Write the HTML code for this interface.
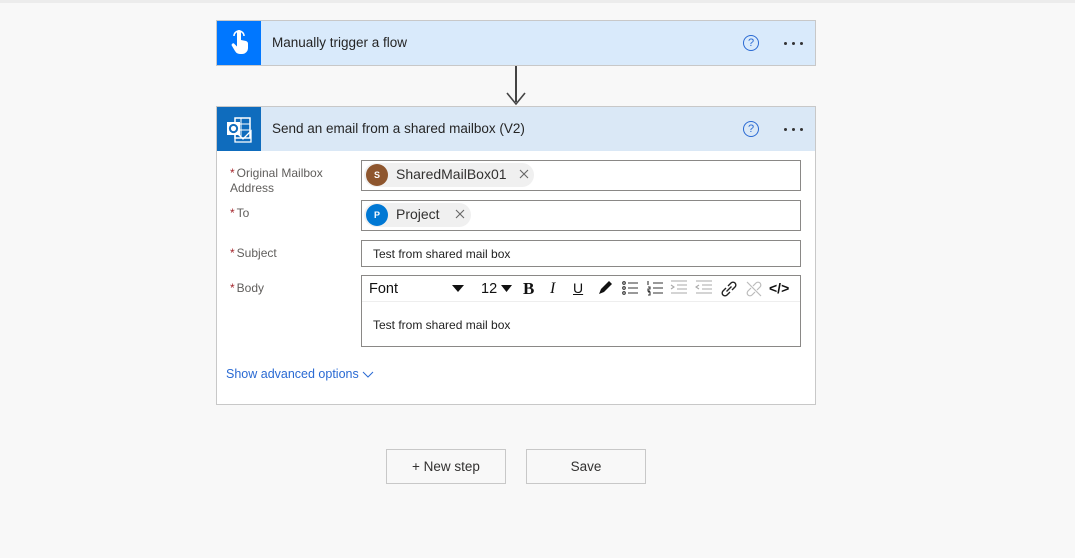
<!DOCTYPE html>
<html><head><style>
*{box-sizing:border-box;margin:0;padding:0}
body{width:1075px;height:558px;background:#f8f8f8;font-family:"Segoe UI","Liberation Sans",sans-serif;position:relative;overflow:hidden;color:#323130}
.top{position:absolute;left:0;top:0;width:1075px;height:3px;background:#ececec}
.card{position:absolute;left:216px;width:600px;border:1px solid #c8c8c8;background:#fff}
.hdr{height:44px;position:relative;font-size:13.5px}
.ic{position:absolute;left:0;top:0;width:44px;height:44px}
.ttl{position:absolute;left:55px;top:14px;color:#252525}
.q{position:absolute;left:526px;top:14px;width:16px;height:16px;border:1.3px solid #2a6ad3;border-radius:50%;font-size:11px;color:#2a6ad3;text-align:center;line-height:14px}
.dots{position:absolute;left:567px;top:21px;display:flex;height:3px}
.dots i{display:block;width:3px;height:3px;background:#333;border-radius:50%;margin-right:5px}
.lbl{position:absolute;left:13px;font-size:12px;color:#605e5c;line-height:15px}
.lbl b{color:#a4262c;font-weight:normal;margin-right:2px}
.fld{position:absolute;left:144px;width:440px;border:1px solid #8a8886;background:#fff}
.chip{position:absolute;top:2px;height:24px;background:#f0f0f0;border-radius:12px;font-size:14px;padding-left:32px;line-height:23px;color:#323130}
.av{position:absolute;left:2px;top:1px;width:22px;height:22px;border-radius:50%;color:#fff;font-size:9px;font-weight:bold;text-align:center;line-height:22px}
.x{position:absolute;top:6px}
.btn{position:absolute;top:449px;width:120px;height:35px;border:1px solid #c8c8c8;background:#f8f8f8;font-size:13.5px;text-align:center;line-height:33px;color:#323130}
.tb{position:absolute;top:0;height:25px;font-size:15px;line-height:25px;color:#111}
.sv{position:absolute;top:4px}
</style></head><body>
<div class="top"></div>

<div class="card" style="top:20px;height:46px;">
 <div class="hdr" style="background:#d9eafb">
  <div class="ic" style="background:#0077ff">
   <svg width="44" height="44" viewBox="0 0 44 44"><path d="M20 21V11a2 2 0 0 1 4 0v8l5 1a3 3 0 0 1 2 3v4a6 6 0 0 1-6 6h-2a6 6 0 0 1-5-3l-3-5a1.6 1.6 0 0 1 2.5-2l2.5 2.5z" fill="#fff"/><path d="M17 15a5 5 0 0 1 10 0" stroke="#fff" stroke-width="1.5" fill="none"/></svg>
  </div>
  <div class="ttl">Manually trigger a flow</div>
  <div class="q">?</div><div class="dots"><i></i><i></i><i></i></div>
 </div>
</div>

<div style="position:absolute;left:515px;top:66px;width:1.5px;height:36px;background:#444"></div>
<svg style="position:absolute;left:505px;top:90px" width="22" height="16"><path d="M2 3l9 11 9-11" stroke="#444" stroke-width="1.6" fill="none"/></svg>

<div class="card" style="top:106px;height:299px;">
 <div class="hdr" style="background:#dae8f6">
  <div class="ic" style="background:#0f6cbd">
   <svg width="44" height="44" viewBox="0 0 44 44"><rect x="18" y="11" width="15" height="20" fill="none" stroke="#fff" stroke-width="1.5"/><path d="M18 17h15M18 23h15M24 11v20" stroke="#fff" stroke-width="1"/><path d="M18 24l8 8 8-8v11H18z" fill="none" stroke="#fff" stroke-width="1.3"/><rect x="10" y="15" width="13" height="13" fill="#fff"/><circle cx="16.5" cy="21.5" r="3.6" fill="none" stroke="#0f6cbd" stroke-width="2"/></svg>
  </div>
  <div class="ttl">Send an email from a shared mailbox (V2)</div>
  <div class="q">?</div><div class="dots"><i></i><i></i><i></i></div>
 </div>
 <div class="lbl" style="top:59px"><b>*</b>Original Mailbox<br>Address</div>
 <div class="fld" style="top:53px;height:31px">
  <div class="chip" style="left:2px;width:170px"><div class="av" style="background:#8e562e">S</div>SharedMailBox01<svg class="x" style="left:155px" width="10" height="10"><path d="M1 1l8 8M9 1l-8 8" stroke="#666" stroke-width="1.1"/></svg></div>
 </div>
 <div class="lbl" style="top:99px"><b>*</b>To</div>
 <div class="fld" style="top:93px;height:31px">
  <div class="chip" style="left:2px;width:107px"><div class="av" style="background:#0078d4">P</div>Project<svg class="x" style="left:91px" width="10" height="10"><path d="M1 1l8 8M9 1l-8 8" stroke="#666" stroke-width="1.1"/></svg></div>
 </div>
 <div class="lbl" style="top:139px"><b>*</b>Subject</div>
 <div class="fld" style="top:133px;height:27px;font-size:12px;padding:6px 11px;color:#222">Test from shared mail box</div>
 <div class="lbl" style="top:174px"><b>*</b>Body</div>
 <div class="fld" style="top:168px;height:72px">
  <div style="position:absolute;left:0;top:0;width:438px;height:26px;border-bottom:1px solid #eee"></div>
  <div class="tb" style="left:7px;top:1px;font-size:14.5px">Font</div>
  <svg class="sv" style="left:90px;top:9px" width="12" height="8"><path d="M0 0h12L6 7z" fill="#111"/></svg>
  <div class="tb" style="left:119px;top:1px;font-size:14.5px">12</div>
  <svg class="sv" style="left:139px;top:9px" width="11" height="8"><path d="M0 0h11L5.5 7z" fill="#111"/></svg>
  <div class="tb" style="left:161px;font-weight:bold;font-family:'Liberation Serif',serif;font-size:17px">B</div>
  <div class="tb" style="left:188px;font-style:italic;font-family:'Liberation Serif',serif;font-size:16px">I</div>
  <div class="tb" style="left:211px;text-decoration:underline;font-size:14px">U</div>
  <svg class="sv" style="left:235px" width="16" height="16"><path d="M2 14l2-5 8-8 3 3-8 8z" fill="#111"/></svg>
  <svg class="sv" style="left:259px" width="18" height="16"><g fill="none" stroke="#333" stroke-width="1.1"><circle cx="3" cy="3" r="1.3"/><circle cx="3" cy="8" r="1.3"/><circle cx="3" cy="13" r="1.3"/><path d="M7 3h10M7 8h10M7 13h10"/></g></svg>
  <svg class="sv" style="left:284px" width="18" height="16"><g fill="none" stroke="#333" stroke-width="1.1"><path d="M2 1v4M2 7h2v2H2v2h2M2 12h2v3H2M7 3h10M7 8h10M7 13h10"/></g></svg>
  <svg class="sv" style="left:308px" width="18" height="16"><g fill="none" stroke="#aaa" stroke-width="1.1"><path d="M1 1h16M7 5h10M7 9h10M1 13h16M1 5l3 2-3 2"/></g></svg>
  <svg class="sv" style="left:333px" width="18" height="16"><g fill="none" stroke="#aaa" stroke-width="1.1"><path d="M1 1h16M7 5h10M7 9h10M1 13h16M4 5l-3 2 3 2"/></g></svg>
  <svg class="sv" style="left:358px" width="18" height="18"><g fill="none" stroke="#222" stroke-width="1.4"><path d="M8 6l3-3a2.8 2.8 0 0 1 4 4l-3 3M10 12l-3 3a2.8 2.8 0 0 1-4-4l3-3M6.5 11.5l5-5"/></g></svg>
  <svg class="sv" style="left:383px" width="18" height="18"><g fill="none" stroke="#bbb" stroke-width="1.2"><path d="M8 6l3-3a2.8 2.8 0 0 1 4 4l-3 3M10 12l-3 3a2.8 2.8 0 0 1-4-4l3-3M2 2l14 14"/></g></svg>
  <div class="tb" style="left:407px;font-weight:bold;font-size:14px">&lt;/&gt;</div>
  <div style="position:absolute;left:11px;top:42px;font-size:12px;color:#222">Test from shared mail box</div>
 </div>
 <div style="position:absolute;left:9px;top:260px;font-size:12.5px;color:#2a6ad3">Show advanced options</div>
 <svg style="position:absolute;left:145px;top:264px" width="12" height="8"><path d="M1 1l5 5 5-5" stroke="#2a6ad3" fill="none"/></svg>
</div>

<div class="btn" style="left:386px">+ New step</div>
<div class="btn" style="left:526px">Save</div>
</body></html>
